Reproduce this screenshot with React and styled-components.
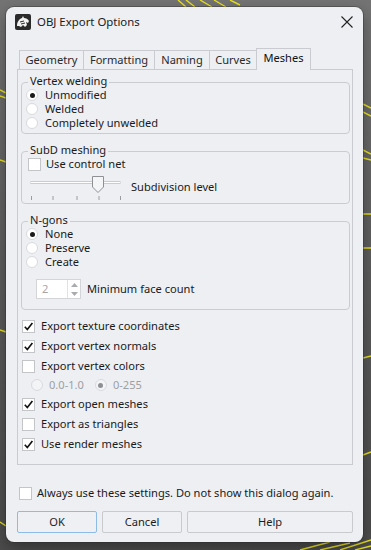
import React from 'react';
import styled, { createGlobalStyle } from 'styled-components';

const GlobalStyle = createGlobalStyle`
  html, body {
    margin: 0;
    padding: 0;
  }
  body {
    overflow: hidden;
    font-family: "Segoe UI", "Noto Sans", "Open Sans", sans-serif;
  }
`;

const Stage = styled.div`
  display: grid;
  width: 371px;
  height: 550px;
  background: linear-gradient(180deg, #747474 0%, #5f5f5f 45%, #4c4c4c 100%);
  overflow: hidden;
  > * {
    grid-area: 1 / 1;
  }
`;

const Backdrop = styled.svg`
  width: 371px;
  height: 550px;
`;

const Dialog = styled.div`
  box-sizing: border-box;
  height: 535px;
  margin: 7px 8px 8px 6px;
  padding: 0 10px 0 11px;
  display: flex;
  flex-direction: column;
  background: #edeff3;
  border-radius: 8px;
  box-shadow: 0 0 0 1px rgba(40, 40, 40, 0.35), 0 6px 16px rgba(0, 0, 0, 0.35);
  color: #1a1a1a;
  font-size: 11.1px;
  line-height: 14px;
`;

const TitleBar = styled.div`
  display: flex;
  align-items: center;
  height: 30px;
  margin: 0 -10px 0 -11px;
  padding: 0 10px 0 9px;
  font-size: 11.4px;
`;

const TitleText = styled.span`
  flex: 1;
  margin-left: 6px;
`;

const TabRow = styled.div`
  display: flex;
  align-items: flex-end;
  height: 21px;
  margin-top: 11px;
  padding-left: 2px;
`;

const Tab = styled.div`
  box-sizing: border-box;
  width: ${p => p.$w}px;
  height: ${p => (p.$active ? 22 : 19)}px;
  margin-bottom: ${p => (p.$active ? -1 : 0)}px;
  margin-left: -1px;
  display: flex;
  align-items: center;
  justify-content: center;
  border: 1px solid #c9cbd0;
  border-bottom: none;
  background: #edeff3;
  position: relative;
  z-index: ${p => (p.$active ? 2 : 1)};
  color: ${p => (p.$active ? '#111' : '#2a2a2a')};
  padding-bottom: ${p => (p.$active ? 3 : 0)}px;
  &:first-child {
    margin-left: 0;
  }
`;

const Panel = styled.div`
  box-sizing: border-box;
  height: 396px;
  padding: 0 2px 0 3px;
  border: 1px solid #c9cbd0;
  display: flex;
  flex-direction: column;
`;

const Group = styled.div`
  display: flex;
  flex-direction: column;
  margin-top: ${p => p.$top}px;
  padding-bottom: ${p => p.$bottom}px;
  border: 1px solid #cacccf;
  border-radius: 4px;
`;

const Legend = styled.div`
  align-self: flex-start;
  margin: -8px 0 1px 6px;
  padding: 0 2px;
  line-height: 12px;
  background: #edeff3;
`;

const OptionRow = styled.label`
  display: flex;
  align-items: center;
  height: ${p => p.$h || 14}px;
  padding-left: ${p => p.$indent || 0}px;
  gap: ${p => p.$gap || 6}px;
  white-space: nowrap;
  color: ${p => (p.$disabled ? '#9d9fa3' : 'inherit')};
`;

const RadioDot = styled.span`
  box-sizing: border-box;
  flex: none;
  width: 12px;
  height: 12px;
  border-radius: 50%;
  background: ${p => (p.$disabled ? '#f3f4f6' : '#ffffff')};
  border: 1px solid ${p => (p.$disabled ? '#d9dadd' : '#d8dadd')};
  display: flex;
  align-items: center;
  justify-content: center;
  &::after {
    content: '';
    display: ${p => (p.$on ? 'block' : 'none')};
    width: 5px;
    height: 5px;
    border-radius: 50%;
    background: ${p => (p.$disabled ? '#8d8f93' : '#1a1a1a')};
  }
`;

const CheckBox = styled.span`
  box-sizing: border-box;
  flex: none;
  width: 13px;
  height: 13px;
  background: #ffffff;
  border: 1px solid #c3c5c9;
  display: flex;
  align-items: center;
  justify-content: center;
`;

const SliderRow = styled.div`
  display: flex;
  align-items: center;
  height: 28px;
  margin-top: 2px;
  padding-left: 5px;
  gap: 6px;
`;

const SpinRow = styled.div`
  display: flex;
  align-items: center;
  margin-top: 10px;
  padding-left: 14px;
  gap: 6px;
`;

const Spin = styled.div`
  box-sizing: border-box;
  display: flex;
  width: 45px;
  height: 20px;
  border: 1px solid #d3d5d8;
  background: #ffffff;
`;

const SpinValue = styled.span`
  flex: 1;
  padding-left: 5px;
  line-height: 18px;
  color: #a4a6aa;
`;

const SpinArrows = styled.span`
  width: 12px;
  display: flex;
  flex-direction: column;
  border-left: 1px solid #e1e2e5;
`;

const ArrowHalf = styled.span`
  flex: 1;
  display: flex;
  align-items: center;
  justify-content: center;
`;

const ChecksList = styled.div`
  display: flex;
  flex-direction: column;
  margin-top: 6px;
`;

const ColorModes = styled.div`
  display: flex;
  align-items: center;
  height: 18px;
  padding-left: 10px;
  gap: 11px;
`;

const Footer = styled.div`
  display: flex;
  flex-direction: column;
  padding-top: 20px;
`;

const ButtonBar = styled.div`
  display: grid;
  grid-template-columns: 80px 80px 1fr;
  gap: 5px;
  margin-top: 10px;
`;

const Button = styled.button`
  height: 22px;
  padding: 0;
  border: 1px solid ${p => (p.$default ? '#8dbbe6' : '#c8cace')};
  border-radius: 2px;
  background: #eef0f3;
  color: #1c1c1c;
  font: inherit;
`;

const Tick = () => (
  <svg width="11" height="11" viewBox="0 0 11 11">
    <path d="M1.8 5.8 L4.3 8.6 L9.4 1.9" fill="none" stroke="#111" strokeWidth="1.6" />
  </svg>
);

const Check = ({ on, label, h = 20, indent = 1 }) => (
  <OptionRow $h={h} $indent={indent}>
    <CheckBox>{on && <Tick />}</CheckBox>
    <span>{label}</span>
  </OptionRow>
);

const Radio = ({ on, label, disabled, indent = 4, gap = 7 }) => (
  <OptionRow $indent={indent} $gap={gap} $disabled={disabled}>
    <RadioDot $on={on} $disabled={disabled} />
    <span>{label}</span>
  </OptionRow>
);

const RhinoIcon = () => (
  <svg width="16" height="16" viewBox="0 0 16 16">
    <rect x="0" y="0" width="16" height="16" rx="2" fill="#2b2b2b" />
    <path
      d="M2 12 C2 8 4 5 7 4 L8 2 L9 4 C11 4 13 5 14 7 L13 9 L11 8 L12 11 L10 13 L8 11 L6 13 L4 12 Z"
      fill="#f2f2f2"
    />
    <path d="M5 8 L9 7 M6 10 L10 9" stroke="#2b2b2b" strokeWidth="1" />
  </svg>
);

const CloseIcon = () => (
  <svg width="12" height="12" viewBox="0 0 12 12">
    <path d="M0.5 0.5 L11.5 11.5 M11.5 0.5 L0.5 11.5" stroke="#222" strokeWidth="1.1" />
  </svg>
);

const SubdSlider = () => (
  <svg width="98" height="28" viewBox="0 0 98 28">
    <rect x="4" y="8.5" width="89" height="2" fill="#ffffff" stroke="#c9cbcf" strokeWidth="1" />
    {[4.5, 26, 50, 72, 93.5].map(x => (
      <line key={x} x1={x} y1="23" x2={x} y2="27" stroke="#9a9ca0" strokeWidth="1" />
    ))}
    <path d="M65.5 3.5 H76.5 V14 L71 19.5 L65.5 14 Z" fill="#f4f5f7" stroke="#8e9094" strokeWidth="1" />
  </svg>
);

const tabs = [
  { name: 'Geometry', w: 65 },
  { name: 'Formatting', w: 72 },
  { name: 'Naming', w: 56 },
  { name: 'Curves', w: 48 },
  { name: 'Meshes', w: 55, active: true },
];

const App = () => (
  <Stage>
    <GlobalStyle />
    <Backdrop viewBox="0 0 371 550">
      <g stroke="#e8e020" strokeWidth="1.4" fill="none">
        <path d="M178 0 L186 7 M186 0 L195 7 M200 0 L212 7 M214 0 L226 7 M230 0 L240 5" />
        <path d="M0 90 L6 93 M0 96 L6 98 M0 160 L6 162 M0 330 L6 332 M0 522 L6 526" />
        <path d="M363 104 L371 108 M363 112 L371 116 M363 150 L371 154 M363 158 L371 160" />
        <path d="M363 214 L371 214 M363 248 L371 248 M363 358 L371 356 M363 455 L371 452" />
        <path d="M300 550 L330 542 M320 550 L350 543 M340 550 L371 540 M355 550 L371 546" />
      </g>
    </Backdrop>
    <Dialog>
      <TitleBar>
        <RhinoIcon />
        <TitleText>OBJ Export Options</TitleText>
        <CloseIcon />
      </TitleBar>

      <TabRow>
        {tabs.map(t => (
          <Tab key={t.name} $w={t.w} $active={t.active}>
            {t.name}
          </Tab>
        ))}
      </TabRow>

      <Panel>
        <Group $top={12} $bottom={3}>
          <Legend>Vertex welding</Legend>
          <Radio on label="Unmodified" />
          <Radio label="Welded" />
          <Radio label="Completely unwelded" />
        </Group>

        <Group $top={17} $bottom={2}>
          <Legend>SubD meshing</Legend>
          <OptionRow $h={14} $indent={6} $gap={5}>
            <CheckBox />
            <span>Use control net</span>
          </OptionRow>
          <SliderRow>
            <SubdSlider />
            <span>Subdivision level</span>
          </SliderRow>
        </Group>

        <Group $top={17} $bottom={10}>
          <Legend>N-gons</Legend>
          <Radio on label="None" />
          <Radio label="Preserve" />
          <Radio label="Create" />
          <SpinRow>
            <Spin>
              <SpinValue>2</SpinValue>
              <SpinArrows>
                <ArrowHalf>
                  <svg width="7" height="4" viewBox="0 0 7 4">
                    <path d="M0 4 L3.5 0 L7 4 Z" fill="#a9abaf" />
                  </svg>
                </ArrowHalf>
                <ArrowHalf>
                  <svg width="7" height="4" viewBox="0 0 7 4">
                    <path d="M0 0 L3.5 4 L7 0 Z" fill="#a9abaf" />
                  </svg>
                </ArrowHalf>
              </SpinArrows>
            </Spin>
            <span>Minimum face count</span>
          </SpinRow>
        </Group>

        <ChecksList>
          <Check on label="Export texture coordinates" />
          <Check on label="Export vertex normals" />
          <Check label="Export vertex colors" />
          <ColorModes>
            <Radio disabled label="0.0-1.0" indent={0} gap={6} />
            <Radio disabled on label="0-255" indent={0} gap={6} />
          </ColorModes>
          <Check on label="Export open meshes" />
          <Check label="Export as triangles" />
          <Check on label="Use render meshes" />
        </ChecksList>
      </Panel>

      <Footer>
        <OptionRow $h={16} $indent={2} $gap={5}>
          <CheckBox />
          <span>Always use these settings. Do not show this dialog again.</span>
        </OptionRow>
        <ButtonBar>
          <Button $default>OK</Button>
          <Button>Cancel</Button>
          <Button>Help</Button>
        </ButtonBar>
      </Footer>
    </Dialog>
  </Stage>
);

export default App;
